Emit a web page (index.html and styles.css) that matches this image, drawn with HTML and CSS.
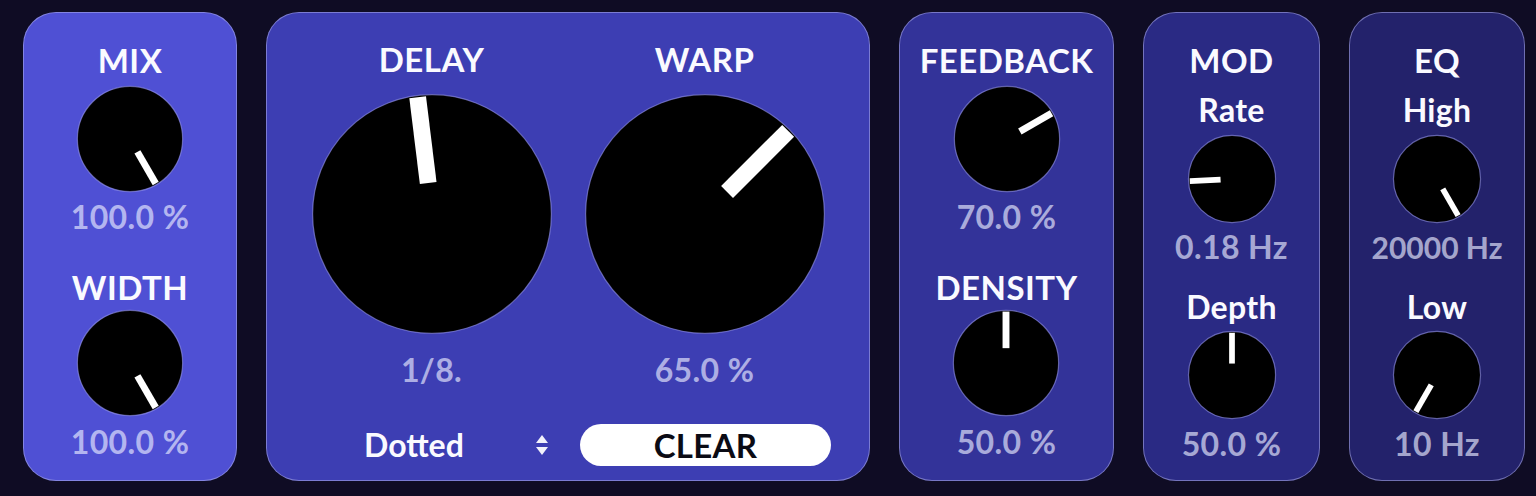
FILE: index.html
```html
<!DOCTYPE html>
<html>
<head>
<meta charset="utf-8">
<link rel="stylesheet" href="styles.css">
</head>
<body>
<div class="rack">
  <section class="panel panel-mix std">
    <div class="group">
      <div class="title">MIX</div>
      <svg class="knob k-md" viewBox="-100 -100 200 200"><circle r="99.3"/><rect x="-6.5" y="-97" width="13" height="69" transform="rotate(150)"/></svg>
      <div class="value">100.0 %</div>
    </div>
    <div class="group second">
      <div class="title">WIDTH</div>
      <svg class="knob k-md" viewBox="-100 -100 200 200"><circle r="99.3"/><rect x="-6.5" y="-97" width="13" height="69" transform="rotate(150)"/></svg>
      <div class="value">100.0 %</div>
    </div>
  </section>

  <section class="panel panel-delay">
    <div class="cols">
      <div class="group big">
        <div class="title">DELAY</div>
        <svg class="knob k-lg" viewBox="-100 -100 200 200"><circle r="99.5"/><rect x="-7" y="-98" width="14" height="72" transform="rotate(-7)"/></svg>
        <div class="value">1/8.</div>
      </div>
      <div class="group big">
        <div class="title">WARP</div>
        <svg class="knob k-lg" viewBox="-100 -100 200 200"><circle r="99.5"/><rect x="-7" y="-98" width="14" height="72" transform="rotate(45)"/></svg>
        <div class="value">65.0 %</div>
      </div>
    </div>
    <div class="footer">
      <div class="select">
        <span class="select-text">Dotted</span>
        <svg class="arrows" viewBox="0 0 14 22"><polygon points="7,1 13,9 1,9"/><polygon points="1,13 13,13 7,21"/></svg>
      </div>
      <button class="clear">CLEAR</button>
    </div>
  </section>

  <section class="panel panel-fb std">
    <div class="group">
      <div class="title">FEEDBACK</div>
      <svg class="knob k-md" viewBox="-100 -100 200 200"><circle r="99.3"/><rect x="-6.5" y="-97" width="13" height="69" transform="rotate(60)"/></svg>
      <div class="value">70.0 %</div>
    </div>
    <div class="group second">
      <div class="title">DENSITY</div>
      <svg class="knob k-md" viewBox="-100 -100 200 200"><circle r="99.3"/><rect x="-6.5" y="-97" width="13" height="69" transform="rotate(0)"/></svg>
      <div class="value">50.0 %</div>
    </div>
  </section>

  <section class="panel panel-mod sub">
    <div class="title">MOD</div>
    <div class="group first">
      <div class="label">Rate</div>
      <svg class="knob k-sm" viewBox="-100 -100 200 200"><circle r="99"/><rect x="-6.5" y="-96" width="13" height="70" transform="rotate(-93)"/></svg>
      <div class="value">0.18 Hz</div>
    </div>
    <div class="group second">
      <div class="label">Depth</div>
      <svg class="knob k-sm" viewBox="-100 -100 200 200"><circle r="99"/><rect x="-6.5" y="-96" width="13" height="70" transform="rotate(0)"/></svg>
      <div class="value">50.0 %</div>
    </div>
  </section>

  <section class="panel panel-eq sub">
    <div class="title">EQ</div>
    <div class="group first">
      <div class="label">High</div>
      <svg class="knob k-sm" viewBox="-100 -100 200 200"><circle r="99"/><rect x="-6.5" y="-96" width="13" height="70" transform="rotate(150)"/></svg>
      <div class="value narrow">20000 Hz</div>
    </div>
    <div class="group second">
      <div class="label">Low</div>
      <svg class="knob k-sm" viewBox="-100 -100 200 200"><circle r="99"/><rect x="-6.5" y="-96" width="13" height="70" transform="rotate(-150)"/></svg>
      <div class="value">10 Hz</div>
    </div>
  </section>
</div>
</body>
</html>
```

FILE: styles.css
```css
html, body {
  margin: 0;
  padding: 0;
  background: #0f0c24;
  width: 1536px;
  height: 496px;
  overflow: hidden;
  font-family: "Lato", "Open Sans", sans-serif;
}

.rack {
  display: flex;
  gap: 29px;
  padding: 12px 0 0 23px;
}

.panel {
  box-sizing: border-box;
  height: 469px;
  border: 1.5px solid rgba(175, 175, 235, 0.55);
  border-radius: 33px;
  display: flex;
  flex-direction: column;
  align-items: center;
  padding-top: 26.5px;
}

.panel-mix { width: 214px; background: #4f50d4; }
.panel-delay { width: 604px; background: #3d3eb3; padding-top: 25.5px; }
.panel-fb { width: 215px; background: #333399; }
.panel-mod { width: 177px; background: #2a2a84; }
.panel-eq { width: 176px; background: #23226b; }

.group {
  display: flex;
  flex-direction: column;
  align-items: center;
}

.title {
  color: #fafaff;
  font-size: 33px;
  font-weight: 700;
  line-height: 40px;
  height: 40px;
  letter-spacing: 0.5px;
  white-space: nowrap;
}

.label {
  color: #fafaff;
  font-size: 32px;
  font-weight: 700;
  line-height: 40px;
  height: 40px;
  letter-spacing: 0.3px;
  white-space: nowrap;
}

.value {
  color: rgba(232, 234, 255, 0.68);
  font-size: 32px;
  font-weight: 700;
  line-height: 40px;
  height: 40px;
  letter-spacing: 0.4px;
  white-space: nowrap;
}

.value.narrow {
  font-size: 30px;
  letter-spacing: 0;
}

.knob {
  display: block;
  overflow: visible;
}

.knob circle {
  fill: #000;
  stroke: rgba(150, 150, 235, 0.6);
  stroke-width: 1.2px;
  vector-effect: non-scaling-stroke;
}

.knob rect {
  fill: #fff;
}

.k-md { width: 106px; height: 106px; }
.k-sm { width: 88px; height: 88px; }
.k-lg { width: 240px; height: 240px; }

/* standard panels: MIX / FEEDBACK */
.std .group .knob { margin-top: 6px; }
.std .group .value { margin-top: 5px; }
.std .group.second { margin-top: 30px; }
.std .group.second .knob { margin-top: 3px; }
.std .group.second .value { margin-top: 6px; }

/* sub-labelled panels: MOD / EQ */
.sub .group.first { margin-top: 10.5px; }
.sub .group .knob { margin-top: 4.5px; }
.sub .group .value { margin-top: 4.5px; }
.sub .group.second { margin-top: 19.5px; }

/* delay panel */
.cols {
  display: flex;
  gap: 33px;
}

.big .knob { margin-top: 15px; }
.big .value { margin-top: 16px; }

.footer {
  display: grid;
  grid-template-columns: 240px 251px;
  column-gap: 28px;
  align-items: center;
  margin-top: 34px;
  margin-left: 7px;
}

.select {
  box-sizing: border-box;
  display: flex;
  justify-content: space-between;
  align-items: center;
  padding: 0 3px 0 52px;
  height: 42px;
}

.select-text {
  color: #fafaff;
  font-size: 32px;
  font-weight: 700;
  line-height: 40px;
}

.arrows {
  width: 14px;
  height: 22px;
  fill: #f2f2fb;
}

.clear {
  height: 42px;
  border: none;
  border-radius: 21px;
  background: #ffffff;
  color: #0b0b14;
  font-family: "Lato", "Open Sans", sans-serif;
  font-size: 33px;
  font-weight: 700;
  line-height: 42px;
  padding: 0;
  letter-spacing: 0.3px;
}
```
